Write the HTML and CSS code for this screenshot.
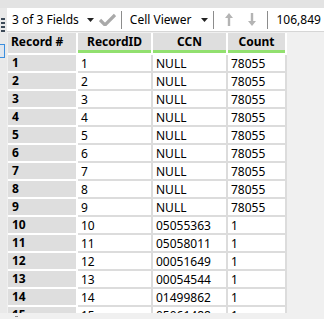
FILE: index.html
```html
<!DOCTYPE html>
<html>
<head>
<meta charset="utf-8">
<link rel="stylesheet" href="styles.css">
</head>
<body>
<div class="top"></div>
<div class="main">
  <div class="side">
    <div class="dots"><span></span><span></span><span></span><span></span></div>
    <div class="sidebox"></div>
  </div>
  <div class="content">
    <div class="toolbar">
      <span class="tb-text first">3 of 3 Fields</span>
      <svg class="caret" width="7" height="4" viewBox="0 0 7 4"><path d="M0 0H7L3.5 4Z" fill="#222"/></svg>
      <svg class="check" width="17" height="13" viewBox="0 0 17 13"><path d="M1 7L6 12L16 2" fill="none" stroke="#a9a9a9" stroke-width="3.2"/></svg>
      <span class="sep"></span>
      <span class="tb-text">Cell Viewer</span>
      <svg class="caret caret2" width="7" height="4" viewBox="0 0 7 4"><path d="M0 0H7L3.5 4Z" fill="#222"/></svg>
      <span class="sep"></span>
      <svg class="arrow up" width="8" height="13" viewBox="0 0 8 13"><path d="M4 0L8 5H5.2V13H2.8V5H0Z" fill="#b4b4b4"/></svg>
      <svg class="arrow down" width="8" height="13" viewBox="0 0 8 13"><path d="M4 13L8 8H5.2V0H2.8V8H0Z" fill="#b4b4b4"/></svg>
      <span class="sep"></span>
      <span class="tb-text">106,849 records</span>
    </div>
    <div class="tablewrap">
      <div class="grid">
        <div class="hc lab">Record #</div>
        <div class="hc fld">RecordID</div>
        <div class="hc fld">CCN</div>
        <div class="hc fld">Count</div>

        <div class="lc">1</div><div class="dc">1</div><div class="dc">NULL</div><div class="dc">78055</div>
        <div class="lc">2</div><div class="dc">2</div><div class="dc">NULL</div><div class="dc">78055</div>
        <div class="lc">3</div><div class="dc">3</div><div class="dc">NULL</div><div class="dc">78055</div>
        <div class="lc">4</div><div class="dc">4</div><div class="dc">NULL</div><div class="dc">78055</div>
        <div class="lc">5</div><div class="dc">5</div><div class="dc">NULL</div><div class="dc">78055</div>
        <div class="lc">6</div><div class="dc">6</div><div class="dc">NULL</div><div class="dc">78055</div>
        <div class="lc">7</div><div class="dc">7</div><div class="dc">NULL</div><div class="dc">78055</div>
        <div class="lc">8</div><div class="dc">8</div><div class="dc">NULL</div><div class="dc">78055</div>
        <div class="lc">9</div><div class="dc">9</div><div class="dc">NULL</div><div class="dc">78055</div>
        <div class="lc">10</div><div class="dc">10</div><div class="dc">05055363</div><div class="dc">1</div>
        <div class="lc">11</div><div class="dc">11</div><div class="dc">05058011</div><div class="dc">1</div>
        <div class="lc">12</div><div class="dc">12</div><div class="dc">00051649</div><div class="dc">1</div>
        <div class="lc">13</div><div class="dc">13</div><div class="dc">00054544</div><div class="dc">1</div>
        <div class="lc">14</div><div class="dc">14</div><div class="dc">01499862</div><div class="dc">1</div>
        <div class="lc">15</div><div class="dc">15</div><div class="dc">05061488</div><div class="dc">1</div>
      </div>
    </div>
  </div>
</div>
<div class="hscroll"><span class="hmark"></span></div>
</body>
</html>
```
FILE: styles.css
```css
html, body {
  margin: 0;
  padding: 0;
}
body {
  width: 324px;
  height: 319px;
  overflow: hidden;
  background: #f0f0f0;
  font-family: "Noto Sans", "Open Sans", sans-serif;
  font-size: 12px;
  color: #000;
  position: relative;
}
.top {
  height: 8px;
  background: #e3e3e3;
}
.main {
  display: flex;
  height: 305px;
  overflow: hidden;
}
.side {
  width: 7px;
  flex: none;
  background: #e9e9e9;
  display: flex;
  flex-direction: column;
  align-items: flex-start;
}
.dots {
  margin-top: 10px;
  display: grid;
  grid-template-columns: 3px;
  gap: 2px;
  padding-left: 1px;
}
.dots span {
  width: 4px;
  height: 2px;
  background: #3d4a58;
}
.sidebox {
  margin-top: 12px;
  width: 4px;
  height: 12px;
  border: 1px solid #3b8ede;
  border-left: none;
  background: #dfe6ee;
}
.content {
  flex: 1;
  display: flex;
  flex-direction: column;
  min-width: 0;
}
.toolbar {
  height: 23px;
  background: #fff;
  border-bottom: 1px solid #d6d6d6;
  display: flex;
  align-items: center;
  white-space: nowrap;
  overflow: hidden;
}
.tb-text {
  font-size: 12px;
  line-height: 16px;
  color: #000;
}
.tb-text.first {
  margin-left: 5px;
}
.caret {
  margin-left: 8px;
  margin-top: 1px;
  flex: none;
}
.caret2 {
  margin-left: 10px;
}
.check {
  margin-left: 5px;
  flex: none;
}
.sep {
  width: 1px;
  height: 18px;
  background: #8c8c8c;
  margin-left: 5px;
  margin-right: 8px;
  flex: none;
}
.arrow {
  flex: none;
}
.arrow.up {
  margin-left: 3px;
}
.arrow.down {
  margin-left: 15px;
  margin-right: 6px;
}
.tablewrap {
  margin-top: 1px;
  background: #f0f0f0;
  flex: 1;
  overflow: hidden;
}
.grid {
  display: grid;
  grid-template-columns: 70px 75px 75px 59px;
  grid-auto-rows: 18px;
  grid-template-rows: 22px;
  width: 279px;
  margin-left: 1px;
  background: #fff;
}
.hc {
  background: #dedede;
  border-right: 2px solid #fff;
  border-bottom: 2px solid #fff;
  font-weight: bold;
  line-height: 18px;
  padding-top: 0;
}
.hc.lab {
  padding-left: 3px;
}
.hc.fld {
  text-align: center;
  box-shadow: inset 0 -3px 0 #92e06f;
}
.lc {
  background: #dedede;
  border-right: 2px solid #fff;
  border-bottom: 2px solid #fff;
  font-weight: bold;
  padding-left: 4px;
  line-height: 16px;
}
.dc {
  background: #fff;
  border-right: 2px solid #dcdcdc;
  border-bottom: 2px solid #dcdcdc;
  padding-left: 3px;
  line-height: 17px;
}
.hscroll {
  position: absolute;
  left: 0;
  right: 0;
  bottom: 0;
  height: 6px;
  background: #f0f0f0;
}
.hmark {
  position: absolute;
  left: 15px;
  top: 3px;
  width: 3px;
  height: 1px;
  background: #888;
}
```
